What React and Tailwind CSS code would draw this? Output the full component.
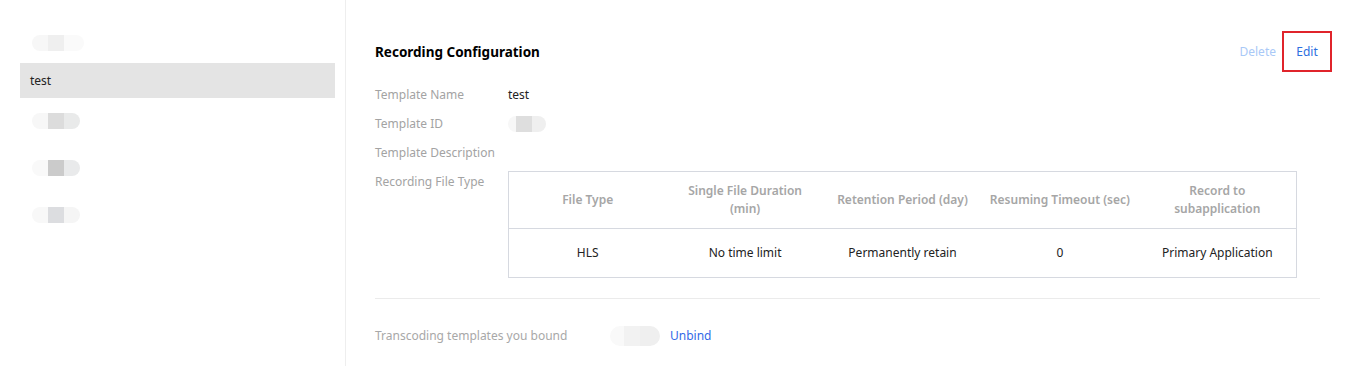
import React from 'react';

const SideItem = ({ shades }) => (
  <div className="h-[35px] px-[12px] flex items-center">
    <div className="flex h-4 rounded-full overflow-hidden">
      {shades.map((c, i) => (
        <div key={i} className={`w-4 h-4 ${c}`} />
      ))}
    </div>
  </div>
);

const columns = [
  { head: ['File Type'], value: 'HLS' },
  { head: ['Single File Duration', '(min)'], value: 'No time limit' },
  { head: ['Retention Period (day)'], value: 'Permanently retain' },
  { head: ['Resuming Timeout (sec)'], value: '0' },
  { head: ['Record to', 'subapplication'], value: 'Primary Application' },
];

const InfoRow = ({ label, children }) => (
  <div className="flex items-center h-[29px]">
    <div className="w-[133px] text-[#a3a3a3]">{label}</div>
    <div className="text-[#222]">{children}</div>
  </div>
);

export default function App() {
  return (
    <div className="w-[1360px] h-[386px] bg-white flex text-[12px]" style={{ fontFamily: '"Noto Sans", "Open Sans", sans-serif' }}>
      <aside className="w-[346px] pt-[18px] border-r border-[#eeeeee] h-[366px] mt-[18px] -translate-y-[18px]">
        <div className="pl-[20px] pr-[10px] pt-[5px]">
          <div className="h-[40px] flex items-center pl-[12px]">
            <div className="flex rounded-full overflow-hidden">
              <div className="w-[16px] h-4 bg-[#f7f7f7]" />
              <div className="w-[16px] h-4 bg-[#efefef]" />
              <div className="w-[20px] h-4 bg-[#fafafa]" />
            </div>
          </div>
          <div className="h-[35px] bg-[#e4e4e4] flex items-center px-[10px] text-[#222]">test</div>
          <div className="flex flex-col gap-[12px] pt-[5px]">
            <SideItem shades={['bg-[#f7f7f7]', 'bg-[#dcdcdc]', 'bg-[#e9eaea]']} />
            <SideItem shades={['bg-[#f9f9f9]', 'bg-[#cbcbcb]', 'bg-[#e9eaeb]']} />
            <SideItem shades={['bg-[#f8f8f8]', 'bg-[#dcdde0]', 'bg-[#f5f5f5]']} />
          </div>
        </div>
      </aside>

      <main className="flex-1 pl-[29px] pr-[40px] pt-[31px]">
        <div className="flex items-start justify-between -mr-[12px]">
          <h2 className="text-[13.5px] font-bold text-black pt-[11px]">Recording Configuration</h2>
          <div className="flex items-center">
            <span className="text-[#a9c9f7] mr-[6px]">Delete</span>
            <span className="w-[50px] h-[41px] border-2 border-[#e0242b] flex items-center justify-center text-[#2d6fe0]">Edit</span>
          </div>
        </div>

        <div className="mt-[8px]">
          <InfoRow label="Template Name">test</InfoRow>
          <InfoRow label="Template ID">
            <div className="flex rounded-full overflow-hidden">
              <div className="w-[8px] h-4 bg-[#f7f7f7]" />
              <div className="w-[16px] h-4 bg-[#dedede]" />
              <div className="w-[14px] h-4 bg-[#efefef]" />
            </div>
          </InfoRow>
          <InfoRow label="Template Description" />
          <div className="flex items-start">
            <div className="w-[133px] text-[#a3a3a3] pt-[6px]">Recording File Type</div>
            <div className="w-[789px] mt-[4px] border border-[#d6d9e0]">
              <div className="grid grid-cols-5 h-[57px] border-b border-[#d6d9e0] font-semibold text-[#a6a6a6]">
                {columns.map((c) => (
                  <div key={c.value} className="flex flex-col items-center justify-center text-center leading-[18px]">
                    {c.head.map((line) => (
                      <span key={line}>{line}</span>
                    ))}
                  </div>
                ))}
              </div>
              <div className="grid grid-cols-5 h-[48px] text-[#222]">
                {columns.map((c) => (
                  <div key={c.value} className="flex items-center justify-center">{c.value}</div>
                ))}
              </div>
            </div>
          </div>
        </div>

        <div className="mt-[20px] border-t border-[#ebebeb]" />

        <div className="flex items-center mt-[27px] h-[20px]">
          <div className="w-[235px] text-[#a8a8a8]">Transcoding templates you bound</div>
          <div className="flex rounded-full overflow-hidden mr-[10px]">
            <div className="w-[14px] h-5 bg-[#f9f9f9]" />
            <div className="w-[16px] h-5 bg-[#f2f2f2]" />
            <div className="w-[20px] h-5 bg-[#efefef]" />
          </div>
          <span className="text-[#3369e7]">Unbind</span>
        </div>
      </main>
    </div>
  );
}
